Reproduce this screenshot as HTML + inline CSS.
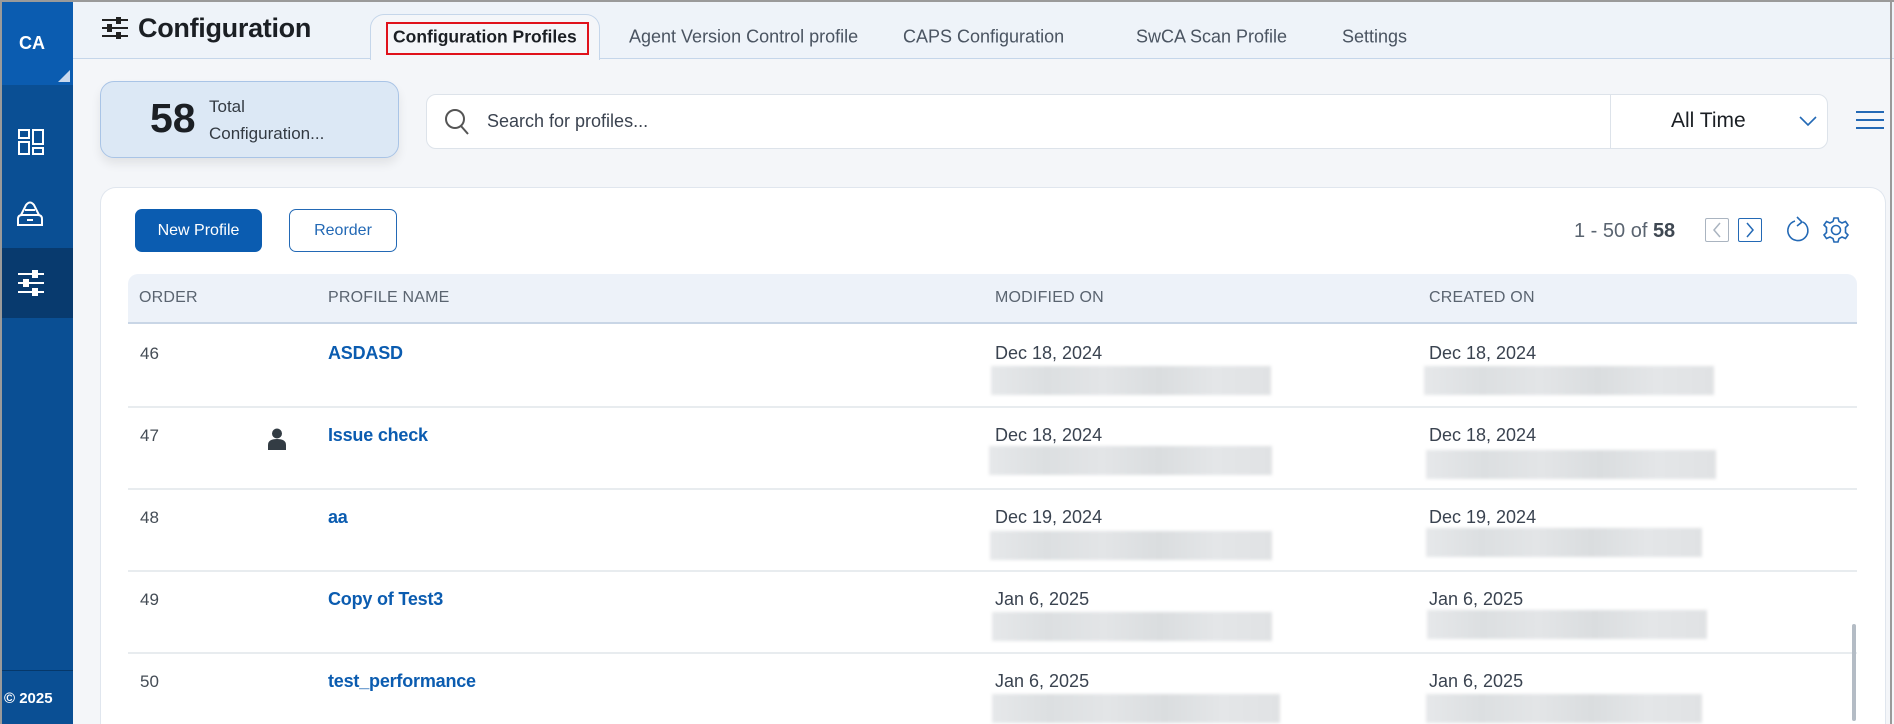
<!DOCTYPE html>
<html style="overflow:hidden;width:1894px;height:724px"><head><meta charset="utf-8"><style>
*{box-sizing:border-box;margin:0;padding:0}
body{width:1894px;height:724px;overflow:hidden;background:#f4f6f9;font-family:"Liberation Sans",sans-serif;position:relative;border-top:2px solid #9a9a9a;border-left:2px solid #9a9a9a}
.abs{position:absolute}
.sb{left:0;top:0;width:71px;height:724px;background:#0a4f94}
.hdr{left:71px;top:0;width:1823px;height:57px;background:#eef3f9;border-bottom:1px solid #c5d6ea}
.tab{top:35px;font-size:18px;color:#4a5461;transform:translateY(-50%)}
.blur{background:linear-gradient(90deg,#e6e8ea,#dcdfe1 20%,#e3e5e7 40%,#dadddf 60%,#e4e6e8 80%,#e0e2e4);filter:blur(1.5px);height:29px}
.row{left:126px;width:1729px;height:82px;border-bottom:2px solid #e8ecef}
.num{font-size:17px;color:#444c55;top:18px;left:12px}
.nm{font-size:18px;font-weight:bold;color:#0b5cb0;top:17px;left:200px;letter-spacing:-0.2px}
.dt{font-size:18px;color:#3a4350;top:17px}
.th{font-size:16px;color:#5a6470;letter-spacing:0.2px}
</style></head><body>
<div class="abs sb"></div>
<div class="abs" style="left:0;top:0;width:71px;height:83px;background:#0b5cb0"></div>
<div class="abs" style="left:56px;top:68px;width:0;height:0;border-left:12px solid transparent;border-bottom:12px solid #c9d9ee"></div>
<div class="abs" style="left:17px;top:31px;color:#fff;font-weight:bold;font-size:18px">CA</div>
<svg class="abs" style="left:15px;top:126px" width="28" height="28" viewBox="0 0 28 28" fill="none" stroke="#fff" stroke-width="2"><rect x="2" y="2" width="10" height="8"/><rect x="2" y="14" width="10" height="12"/><rect x="16" y="2" width="10" height="14"/><rect x="16" y="20" width="10" height="6"/></svg>
<svg class="abs" style="left:13px;top:195px" width="30" height="32" viewBox="0 0 30 32" fill="none" stroke="#fff" stroke-width="2"><path d="M3 28 V22 Q3 18 7 18 H23 Q27 18 27 22 V28 Z"/><path d="M6 18 L11 8 Q15 3 19 8 L24 18"/><path d="M12 23 H18"/><path d="M10 13 H20"/></svg>
<div class="abs" style="left:0;top:246px;width:71px;height:70px;background:#083a6e"></div>
<svg class="abs" style="left:15px;top:267px" width="28" height="28" viewBox="0 0 28 28" stroke="#fff" stroke-width="2"><path d="M1 5H27M1 14H27M1 23H27"/><rect x="16" y="2" width="4" height="6" fill="#fff"/><rect x="7" y="11" width="4" height="6" fill="#fff"/><rect x="16" y="20" width="4" height="6" fill="#fff"/></svg>
<div class="abs" style="left:0;top:668px;width:71px;height:1px;background:#06386a"></div>
<div class="abs" style="left:2px;top:688px;color:#fff;font-size:15px;font-weight:bold">© 2025</div>

<div class="abs hdr"></div>
<svg class="abs" style="left:100px;top:15px" width="26" height="22" viewBox="0 0 26 22" stroke="#222" stroke-width="2"><path d="M0 3H26M0 11H26M0 19H26"/><rect x="15" y="0" width="3" height="6" fill="#222"/><rect x="6" y="8" width="3" height="6" fill="#222"/><rect x="15" y="16" width="3" height="6" fill="#222"/></svg>
<div class="abs" style="left:136px;top:11px;font-size:27px;color:#1b1f24;font-weight:bold;letter-spacing:-0.3px">Configuration</div>
<div class="abs" style="left:368px;top:12px;width:230px;height:46px;background:#f4f6f9;border:1px solid #c5d6ea;border-bottom:none;border-radius:14px 14px 0 0"></div>
<div class="abs" style="left:384px;top:20px;width:203px;height:33px;border:2px solid #e0121b"></div>
<div class="abs tab" style="left:391px;font-weight:bold;color:#1b1f24;font-size:17.5px">Configuration Profiles</div>
<div class="abs tab" style="left:627px">Agent Version Control profile</div>
<div class="abs tab" style="left:901px">CAPS Configuration</div>
<div class="abs tab" style="left:1134px">SwCA Scan Profile</div>
<div class="abs tab" style="left:1340px">Settings</div>

<div class="abs" style="left:98px;top:79px;width:299px;height:77px;background:#dce8f5;border:1px solid #a9c4e6;border-radius:14px;box-shadow:0 6px 10px rgba(0,0,0,0.08)"></div>
<div class="abs" style="left:148px;top:93px;font-size:41px;color:#1b1f24;font-weight:bold">58</div>
<div class="abs" style="left:207px;top:91px;font-size:17px;color:#333a42;line-height:27px">Total<br>Configuration...</div>

<div class="abs" style="left:424px;top:92px;width:1402px;height:55px;background:#fff;border:1px solid #dde3ea;border-radius:10px"></div>
<svg class="abs" style="left:442px;top:106px" width="26" height="28" viewBox="0 0 26 28" fill="none" stroke="#555" stroke-width="2"><circle cx="11" cy="11" r="9"/><path d="M17 18L24 26"/></svg>
<div class="abs" style="left:485px;top:109px;font-size:18px;color:#3b4350">Search for profiles...</div>
<div class="abs" style="left:1608px;top:93px;width:1px;height:53px;background:#dde3ea"></div>
<div class="abs" style="left:1669px;top:107px;font-size:21px;color:#1b1f24">All Time</div>
<svg class="abs" style="left:1797px;top:113px" width="18" height="12" viewBox="0 0 18 12" fill="none" stroke="#2369b5" stroke-width="1.6"><path d="M1 2L9 10L17 2"/></svg>
<svg class="abs" style="left:1854px;top:109px" width="28" height="18" viewBox="0 0 28 18" stroke="#2369b5" stroke-width="2"><path d="M0 1H28M0 9H28M0 17H28"/></svg>

<div class="abs" style="left:98px;top:185px;width:1786px;height:539px;background:#fff;border:1px solid #e0e6ee;border-bottom:none;border-radius:16px 16px 0 0"></div>
<div class="abs" style="left:133px;top:207px;width:127px;height:43px;background:#0b5cb0;border-radius:7px;color:#fff;font-size:16px;text-align:center;line-height:43px">New Profile</div>
<div class="abs" style="left:287px;top:207px;width:108px;height:43px;background:#fff;border:1px solid #2369b5;border-radius:7px;color:#2369b5;font-size:16px;text-align:center;line-height:41px">Reorder</div>
<div class="abs" style="left:1572px;top:218px;font-size:20px;color:#5a6470">1 - 50 of <b style="color:#3f4852">58</b></div>
<div class="abs" style="left:1703px;top:216px;width:24px;height:24px;border:1px solid #aab4c0;border-radius:2px"></div>
<svg class="abs" style="left:1709px;top:220px" width="12" height="16" viewBox="0 0 12 16" fill="none" stroke="#aab4c0" stroke-width="1.5"><path d="M9 1L3 8L9 15"/></svg>
<div class="abs" style="left:1736px;top:216px;width:24px;height:24px;border:1.5px solid #2369b5;border-radius:2px"></div>
<svg class="abs" style="left:1742px;top:220px" width="12" height="16" viewBox="0 0 12 16" fill="none" stroke="#2369b5" stroke-width="1.5"><path d="M3 1L9 8L3 15"/></svg>
<svg class="abs" style="left:1782px;top:214px" width="26" height="28" viewBox="0 0 26 28" fill="none" stroke="#2369b5" stroke-width="1.6"><path d="M19 6A10 10 0 1 1 11 5"/><path d="M13 1L18 6L13 10"/></svg>
<svg class="abs" style="left:1820px;top:214px" width="28" height="28" viewBox="0 0 28 28" fill="none" stroke="#2369b5" stroke-width="1.6"><circle cx="14" cy="14" r="4.5"/><path d="M12 2H16L17 5.5L20 7L23.5 5.5L26 9L23.5 11.5V16.5L26 19L23.5 22.5L20 21L17 22.5L16 26H12L11 22.5L8 21L4.5 22.5L2 19L4.5 16.5V11.5L2 9L4.5 5.5L8 7L11 5.5Z"/></svg>

<div class="abs" style="left:126px;top:272px;width:1729px;height:50px;background:#edf2f9;border-bottom:2px solid #c9d6e6;border-radius:10px 10px 0 0"></div>
<div class="abs th" style="left:137px;top:287px">ORDER</div>
<div class="abs th" style="left:326px;top:287px">PROFILE NAME</div>
<div class="abs th" style="left:993px;top:287px">MODIFIED ON</div>
<div class="abs th" style="left:1427px;top:287px">CREATED ON</div>

<div class="abs row" style="top:324px"><div class="abs num">46</div><div class="abs nm">ASDASD</div><div class="abs dt" style="left:867px">Dec 18, 2024</div><div class="abs dt" style="left:1301px">Dec 18, 2024</div><div class="abs blur" style="left:863px;top:40px;width:280px"></div><div class="abs blur" style="left:1296px;top:40px;width:290px"></div></div>
<div class="abs row" style="top:406px"><div class="abs num">47</div>
<svg class="abs" style="left:140px;top:20px" width="18" height="22" viewBox="0 0 18 22" fill="#333c44"><circle cx="9" cy="5.5" r="5"/><path d="M0 22V17Q0 11 9 11Q18 11 18 17V22Z"/></svg>
<div class="abs nm">Issue check</div><div class="abs dt" style="left:867px">Dec 18, 2024</div><div class="abs dt" style="left:1301px">Dec 18, 2024</div><div class="abs blur" style="left:861px;top:38px;width:283px"></div><div class="abs blur" style="left:1298px;top:42px;width:290px"></div></div>
<div class="abs row" style="top:488px"><div class="abs num">48</div><div class="abs nm">aa</div><div class="abs dt" style="left:867px">Dec 19, 2024</div><div class="abs dt" style="left:1301px">Dec 19, 2024</div><div class="abs blur" style="left:862px;top:41px;width:282px"></div><div class="abs blur" style="left:1298px;top:38px;width:276px"></div></div>
<div class="abs row" style="top:570px"><div class="abs num">49</div><div class="abs nm">Copy of Test3</div><div class="abs dt" style="left:867px">Jan 6, 2025</div><div class="abs dt" style="left:1301px">Jan 6, 2025</div><div class="abs blur" style="left:864px;top:40px;width:280px"></div><div class="abs blur" style="left:1299px;top:38px;width:280px"></div></div>
<div class="abs row" style="top:652px;border-bottom:none;height:72px"><div class="abs num">50</div><div class="abs nm">test_performance</div><div class="abs dt" style="left:867px">Jan 6, 2025</div><div class="abs dt" style="left:1301px">Jan 6, 2025</div><div class="abs blur" style="left:864px;top:40px;width:288px"></div><div class="abs blur" style="left:1298px;top:40px;width:276px"></div></div>
<div class="abs" style="left:1850px;top:622px;width:4px;height:97px;background:#b4bcc5;border-radius:2px"></div>
<div class="abs" style="left:1888px;top:0;width:2px;height:724px;background:#9a9a9a"></div>
</body></html>
